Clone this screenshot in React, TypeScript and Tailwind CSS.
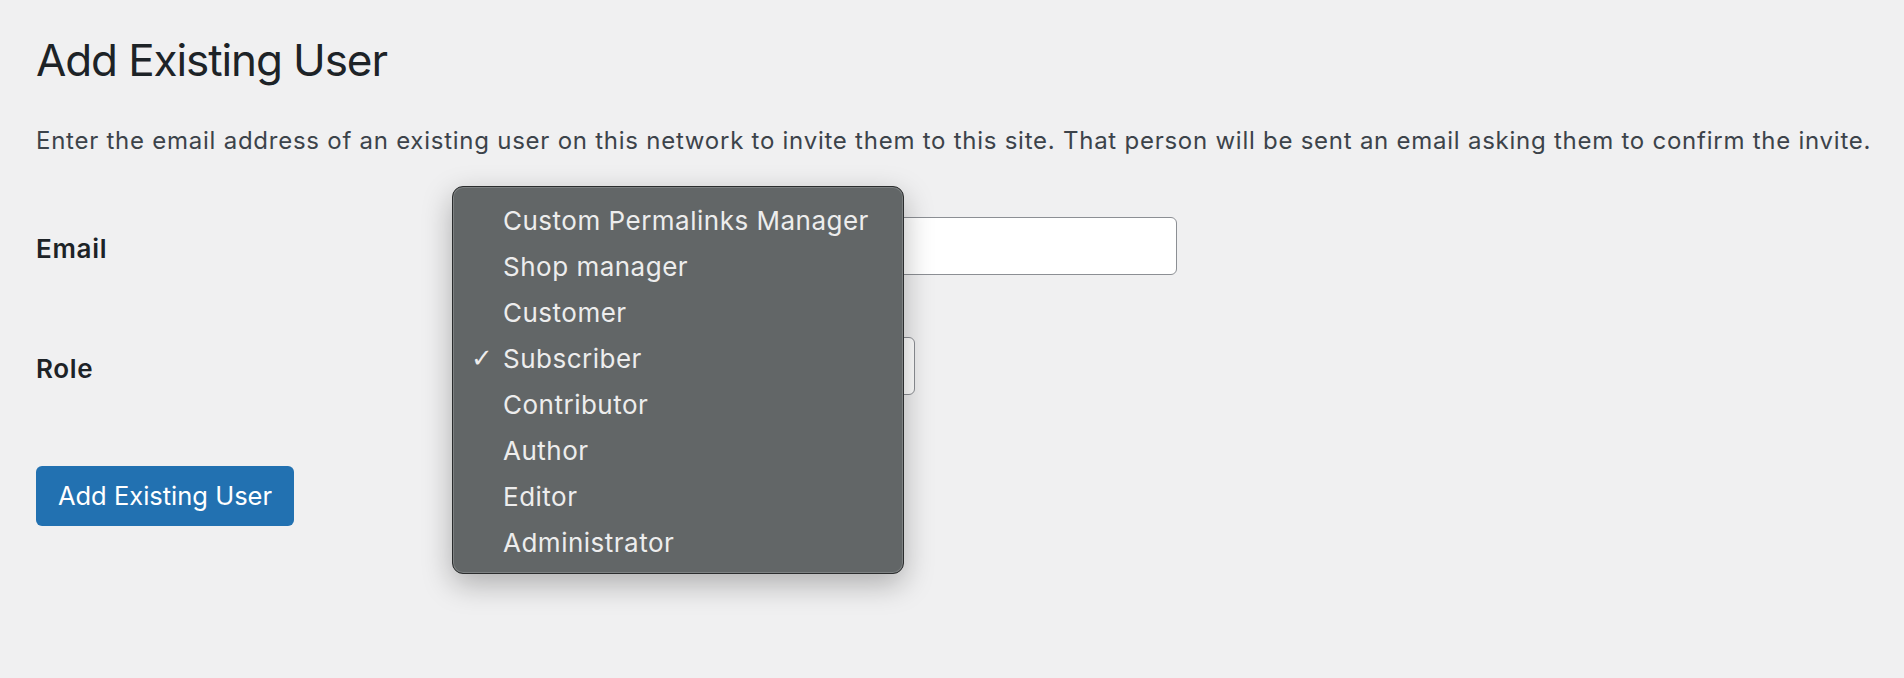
const roles = [
  "Custom Permalinks Manager",
  "Shop manager",
  "Customer",
  "Subscriber",
  "Contributor",
  "Author",
  "Editor",
  "Administrator",
];

export default function App() {
  const selected = "Subscriber";

  return (
    <main className="relative min-h-[678px] bg-[#f0f0f1] pl-[36px] pt-[32px] font-['Inter','Liberation_Sans',sans-serif] text-[#1d2327]">
      <h1 className="text-[44px] leading-[56px] font-normal tracking-[-1.1px]">Add Existing User</h1>
      <p className="mt-[37px] text-[24px] leading-[32px] tracking-[0.75px] text-[#3c434a]">
        Enter the email address of an existing user on this network to invite them to this site. That person will be sent an email asking them to confirm the invite.
      </p>

      <div className="mt-[60px] flex items-start">
        <label className="w-[424px] pt-[16px] text-[26px] leading-[32px] font-semibold tracking-[0.7px]">Email</label>
        <input
          type="email"
          className="h-[58px] w-[717px] rounded-[6px] border border-[#8c8f94] bg-white px-4 text-[23px] outline-none"
        />
      </div>

      <div className="mt-[62px] flex items-start">
        <label className="w-[424px] pt-[16px] text-[26px] leading-[32px] font-semibold tracking-[0.7px]">Role</label>
        <div className="h-[58px] w-[455px] rounded-[6px] border border-[#8c8f94] bg-white"></div>
      </div>

      <button className="mt-[71px] flex h-[60px] w-[258px] items-center justify-center rounded-[6px] bg-[#2271b1] text-[25.5px] text-white">
        Add Existing User
      </button>

      <div className="absolute left-[452px] top-[186px] h-[388px] w-[452px] rounded-[11px] border border-[#2b2d2e] bg-[#626667] py-[10px] shadow-[0_10px_30px_rgba(0,0,0,0.28)] ring-1 ring-inset ring-[#7d8182]">
        {roles.map((r) => (
          <div key={r} className="relative flex h-[46px] items-center pl-[50px] text-[26px] tracking-[0.5px] text-[#ededed]">
            {r === selected && (
              <span className="absolute left-[18px] font-['DejaVu_Sans',sans-serif] text-[26px] font-bold">✓</span>
            )}
            {r}
          </div>
        ))}
      </div>
    </main>
  );
}
